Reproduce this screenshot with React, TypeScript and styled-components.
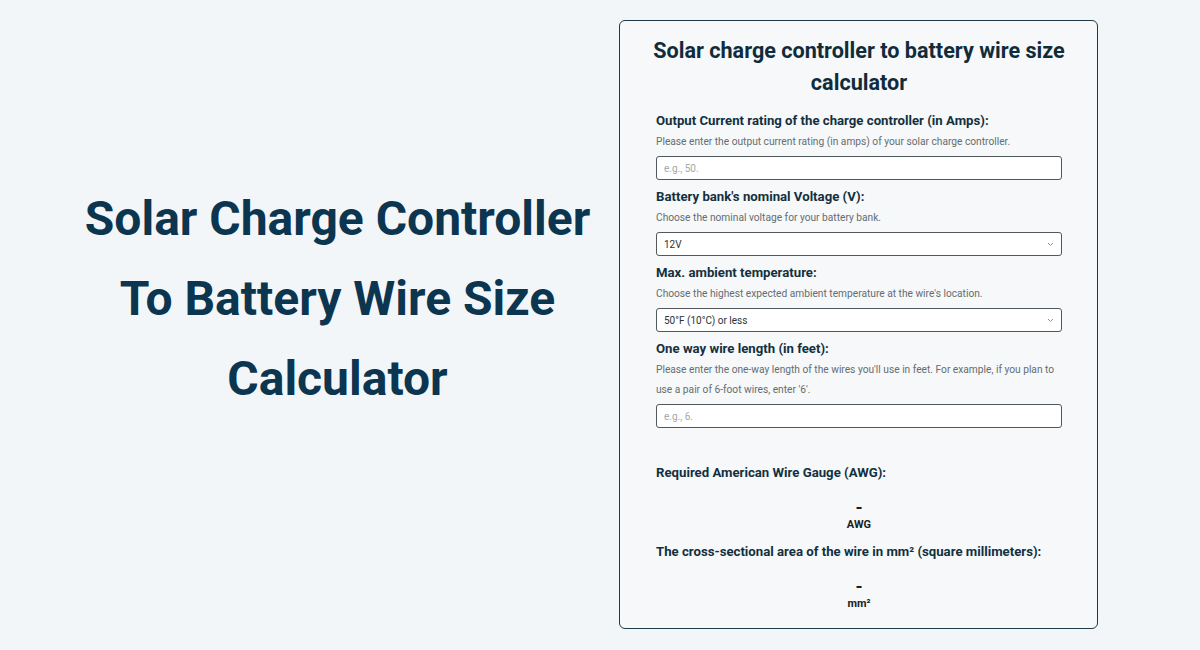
import React from "react";
import styled, { createGlobalStyle } from "styled-components";

const GlobalStyle = createGlobalStyle`
  html, body {
    margin: 0;
    padding: 0;
    background: #f3f6f9;
    font-family: Roboto, "Liberation Sans", Arial, sans-serif;
  }
`;

const Page = styled.div`
  display: flex;
  align-items: flex-start;
  width: 1200px;
  height: 650px;
  padding-left: 56px;
  box-sizing: border-box;
`;

const Hero = styled.div`
  width: 563px;
  height: 650px;
  padding-bottom: 52px;
  box-sizing: border-box;
  display: flex;
  align-items: center;
  justify-content: center;
`;

const HeroTitle = styled.h1`
  margin: 0;
  text-align: center;
  font-size: 48px;
  line-height: 80px;
  font-weight: 700;
  color: #0c3550;
  white-space: nowrap;
`;

const Card = styled.div`
  width: 479px;
  height: 609px;
  margin-top: 20px;
  box-sizing: border-box;
  border: 1.5px solid #1f3a44;
  border-radius: 6px;
  padding: 14px 35px 0 36px;
  background: #f6f8f9;
  color: #14303e;
`;

const CardTitle = styled.h2`
  margin: 0 -12px 14px;
  text-align: center;
  font-size: 21.6px;
  line-height: 32px;
  font-weight: 700;
  color: #102c3b;
  white-space: nowrap;
`;

const Field = styled.div`
  display: flex;
  flex-direction: column;
  margin-bottom: 9px;
`;

const Label = styled.label`
  font-size: 13.2px;
  line-height: 16px;
  font-weight: 700;
  color: #13303f;
`;

const Help = styled.p`
  margin: 3px 0 4px;
  font-size: 10.2px;
  line-height: 20px;
  color: #656d72;
`;

const TextInput = styled.input`
  height: 24px;
  box-sizing: border-box;
  border: 1px solid #50585c;
  border-radius: 3px;
  padding: 0 7px;
  font-family: inherit;
  font-size: 10px;
  background: #fff;
  &::placeholder {
    color: #a3a8ab;
  }
`;

const SelectBox = styled.div`
  position: relative;
  display: flex;
  align-items: center;
  height: 24px;
  box-sizing: border-box;
  border: 1px solid #50585c;
  border-radius: 3px;
  padding: 0 7px;
  font-size: 10px;
  color: #2a3236;
  background: #fff;
`;

const Caret = styled.svg`
  position: absolute;
  right: 7px;
  top: 9px;
`;

const Results = styled.div`
  margin-top: 36px;
`;

const ResultLabel = styled.div`
  font-size: 13.2px;
  line-height: 18px;
  font-weight: 700;
  color: #13303f;
`;

const ResultValue = styled.div`
  text-align: center;
  font-size: 18px;
  line-height: 20px;
  font-weight: 700;
  color: #1a1f22;
  margin-top: 16px;
`;

const ResultUnit = styled.div`
  text-align: center;
  font-size: 11px;
  line-height: 14px;
  font-weight: 700;
  color: #1a1f22;
  margin-bottom: 11px;
`;

const Select: React.FC<{ value: string }> = ({ value }) => (
  <SelectBox>
    {value}
    <Caret width="7" height="5" viewBox="0 0 7 5">
      <path d="M1 1l2.5 2.5L6 1" fill="none" stroke="#8a9094" strokeWidth="1" />
    </Caret>
  </SelectBox>
);

const App: React.FC = () => {
  return (
    <>
      <GlobalStyle />
      <Page>
        <Hero>
          <HeroTitle>
            Solar Charge Controller
            <br />
            To Battery Wire Size
            <br />
            Calculator
          </HeroTitle>
        </Hero>
        <Card>
          <CardTitle>
            Solar charge controller to battery wire size
            <br />
            calculator
          </CardTitle>
          <Field>
            <Label>Output Current rating of the charge controller (in Amps):</Label>
            <Help>Please enter the output current rating (in amps) of your solar charge controller.</Help>
            <TextInput placeholder="e.g., 50." />
          </Field>
          <Field>
            <Label>Battery bank's nominal Voltage (V):</Label>
            <Help>Choose the nominal voltage for your battery bank.</Help>
            <Select value="12V" />
          </Field>
          <Field>
            <Label>Max. ambient temperature:</Label>
            <Help>Choose the highest expected ambient temperature at the wire's location.</Help>
            <Select value="50°F (10°C) or less" />
          </Field>
          <Field>
            <Label>One way wire length (in feet):</Label>
            <Help>
              Please enter the one-way length of the wires you'll use in feet. For example, if you plan to
              use a pair of 6-foot wires, enter '6'.
            </Help>
            <TextInput placeholder="e.g., 6." />
          </Field>
          <Results>
            <ResultLabel>Required American Wire Gauge (AWG):</ResultLabel>
            <ResultValue>-</ResultValue>
            <ResultUnit>AWG</ResultUnit>
            <ResultLabel>The cross-sectional area of the wire in mm² (square millimeters):</ResultLabel>
            <ResultValue>-</ResultValue>
            <ResultUnit>mm²</ResultUnit>
          </Results>
        </Card>
      </Page>
    </>
  );
};

export default App;
